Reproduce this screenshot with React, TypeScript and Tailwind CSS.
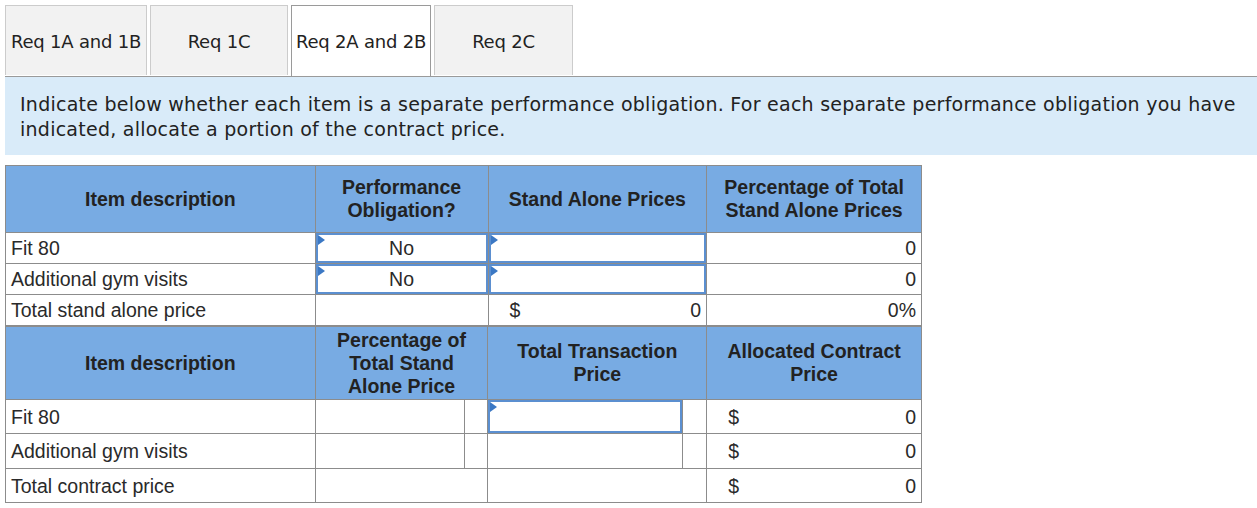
import React from 'react';

const tabs = [
  { label: 'Req 1A and 1B', w: 'w-[142px]' },
  { label: 'Req 1C', w: 'w-[138px]' },
  { label: 'Req 2A and 2B', w: 'w-[140px]' },
  { label: 'Req 2C', w: 'w-[139px]' },
];

function Marker() {
  return (
    <span className="absolute left-0 top-0 h-0 w-0 border-y-[5px] border-l-[7px] border-y-transparent border-l-[#3b78c4]" />
  );
}

function InputBox({ value }: { value?: string }) {
  return (
    <div className="relative flex h-full items-center justify-center border-2 border-[#5b8fd0] bg-white">
      <Marker />
      {value}
    </div>
  );
}

const td = 'border border-[#8c8c8c] px-[5px] align-middle';
const th = 'border border-[#8c8c8c] bg-[#78abe3] font-bold text-[#222] text-center leading-[23px]';

function Dollar() {
  return (
    <div className="flex justify-between pl-[16px]">
      <span>$</span>
      <span>0</span>
    </div>
  );
}

export default function App() {
  return (
    <div className="h-[508px] w-[1257px] bg-white pl-[5px] pt-[5px] text-[#222]">
      <div className="flex gap-[3px] font-['DejaVu_Sans',sans-serif] text-[18px] tracking-[-0.2px]">
        {tabs.map((t, i) => (
          <div
            key={t.label}
            className={
              i === 2
                ? `flex h-[71px] ${t.w} items-center justify-center border border-b-0 border-[#9a9a9a] bg-white pt-[1px]`
                : `flex h-[70px] ${t.w} items-center justify-center border border-b-0 border-[#cccccc] bg-[#f2f2f2] pt-[1px]`
            }
          >
            {t.label}
          </div>
        ))}
      </div>
      <div className="border-t border-[#9a9a9a] bg-[#d9ebf9] px-[15px] pb-[13px] pt-[15px] font-['DejaVu_Sans',sans-serif] text-[19px] leading-[25px] tracking-[0.25px]">
        Indicate below whether each item is a separate performance obligation. For each separate performance obligation you have indicated, allocate a portion of the contract price.
      </div>

      <div className="mt-[10px] font-['Liberation_Sans',Arial,sans-serif] text-[19.5px] leading-[22px] text-[#2a2a2a]">
        <table className="w-[917px] border-collapse">
          <colgroup>
            <col className="w-[310px]" />
            <col className="w-[173px]" />
            <col className="w-[219px]" />
            <col className="w-[215px]" />
          </colgroup>
          <tbody>
            <tr className="h-[67px]">
              <th className={th}>Item description</th>
              <th className={th}>Performance<br />Obligation?</th>
              <th className={th}>Stand Alone Prices</th>
              <th className={th}>Percentage of Total<br />Stand Alone Prices</th>
            </tr>
            {['Fit 80', 'Additional gym visits'].map((r) => (
              <tr key={r} className="h-[31px]">
                <td className={td}>{r}</td>
                <td className="h-[31px] border border-[#8c8c8c] p-0"><InputBox value="No" /></td>
                <td className="h-[31px] border border-[#8c8c8c] p-0"><InputBox /></td>
                <td className={td + ' text-right'}>0</td>
              </tr>
            ))}
            <tr className="h-[31px]">
              <td className={td}>Total stand alone price</td>
              <td className={td}></td>
              <td className="border border-[#8c8c8c] border-t-black px-[5px]">
                <Dollar />
              </td>
              <td className={td + ' text-right'}>0%</td>
            </tr>
          </tbody>
        </table>

        <table className="w-[917px] border-collapse">
          <colgroup>
            <col className="w-[310px]" />
            <col className="w-[150px]" />
            <col className="w-[23px]" />
            <col className="w-[195px]" />
            <col className="w-[24px]" />
            <col className="w-[215px]" />
          </colgroup>
          <tbody>
            <tr className="h-[73px]">
              <th className={th}>Item description</th>
              <th className={th} colSpan={2}>Percentage of<br />Total Stand<br />Alone Price</th>
              <th className={th} colSpan={2}>Total Transaction<br />Price</th>
              <th className={th}>Allocated Contract<br />Price</th>
            </tr>
            <tr className="h-[34px]">
              <td className={td}>Fit 80</td>
              <td className={td}></td>
              <td className={td}></td>
              <td className="h-[34px] border border-[#8c8c8c] p-0"><InputBox /></td>
              <td className={td}></td>
              <td className={td}>
                <Dollar />
              </td>
            </tr>
            <tr className="h-[35px]">
              <td className={td}>Additional gym visits</td>
              <td className={td}></td>
              <td className={td}></td>
              <td className={td}></td>
              <td className={td}></td>
              <td className={td}>
                <Dollar />
              </td>
            </tr>
            <tr className="h-[34px]">
              <td className={td}>Total contract price</td>
              <td className={td} colSpan={2}></td>
              <td className={td} colSpan={2}></td>
              <td className={td}>
                <Dollar />
              </td>
            </tr>
          </tbody>
        </table>
      </div>
    </div>
  );
}
